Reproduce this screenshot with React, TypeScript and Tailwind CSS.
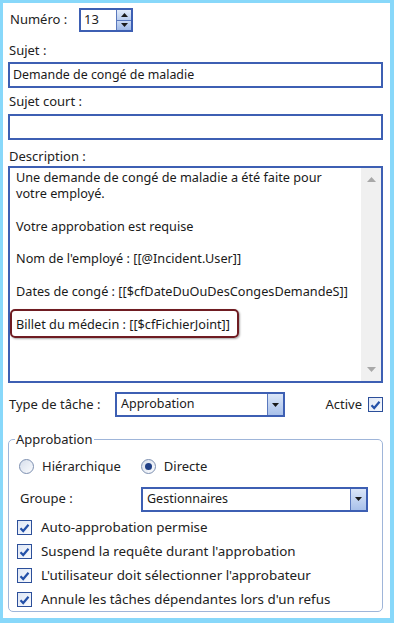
import React from "react";

const FONT = { fontFamily: '"Noto Sans", "Open Sans", sans-serif' };

function Check() {
  return (
    <span className="flex h-[15px] w-[15px] shrink-0 items-center justify-center border border-[#2c4f9a] bg-gradient-to-br from-[#dfe7f5] to-[#f7f9fd]">
      <svg width="11" height="10" viewBox="0 0 11 10" fill="none">
        <path d="M1.5 5.2 L4.2 8 L9.5 1.8" stroke="#2350a8" strokeWidth="2.2" />
      </svg>
    </span>
  );
}

function Radio({ on }: { on?: boolean }) {
  return (
    <span className="flex h-[15px] w-[15px] shrink-0 items-center justify-center rounded-full border border-[#7c8fb0] bg-gradient-to-br from-[#d7dfec] to-[#fbfcfe]">
      {on && <span className="h-[7px] w-[7px] rounded-full bg-[#1f3f86]" />}
    </span>
  );
}

function ComboArrow() {
  return (
    <span className="flex w-[16px] shrink-0 items-center justify-center border-l border-[#5a78bd] bg-gradient-to-b from-[#dbe6f8] to-[#a9c1ea]">
      <svg width="7" height="4" viewBox="0 0 7 4">
        <path d="M0 0 H7 L3.5 4 Z" fill="#1a1a1a" />
      </svg>
    </span>
  );
}

function Combo({ value, className }: { value: string; className: string }) {
  return (
    <div className={`flex h-[25px] border-2 border-[#3d5fb3] bg-white ${className}`}>
      <span className="flex flex-1 items-center pl-[4px] text-[12.5px] text-[#1a1a1a]">{value}</span>
      <ComboArrow />
    </div>
  );
}

export default function App() {
  const checks = [
    "Auto-approbation permise",
    "Suspend la requête durant l'approbation",
    "L'utilisateur doit sélectionner l'approbateur",
    "Annule les tâches dépendantes lors d'un refus",
  ];
  return (
    <div className="h-[623px] w-[394px] bg-[#88d8fa] pb-[5px] pl-[3px] pr-[4px] pt-[3px]" style={FONT}>
      <div className="flex h-full flex-col bg-white pl-[5px] pr-[7px] pt-[5px] text-[13px] text-[#222]">
        {/* Numéro */}
        <div className="flex items-center">
          <span className="w-[71px] pl-[2px]">Numéro :</span>
          <div className="flex h-[24px] w-[54px] border-2 border-[#3d5fb3]">
            <span className="flex flex-1 items-center pl-[3px] text-[13px]">13</span>
            <div className="flex w-[15px] flex-col border-l border-[#5a78bd]">
              <span className="flex flex-1 items-center justify-center border-b border-[#5a78bd] bg-gradient-to-b from-[#e3ecfa] to-[#b9cdee]">
                <svg width="7" height="4" viewBox="0 0 7 4">
                  <path d="M0 4 H7 L3.5 0 Z" fill="#1a1a1a" />
                </svg>
              </span>
              <span className="flex flex-1 items-center justify-center bg-gradient-to-b from-[#c8d8f3] to-[#9fb8e6]">
                <svg width="7" height="4" viewBox="0 0 7 4">
                  <path d="M0 0 H7 L3.5 4 Z" fill="#1a1a1a" />
                </svg>
              </span>
            </div>
          </div>
        </div>

        {/* Sujet */}
        <span className="mt-[10px] h-[16px] pl-[1px] leading-[16px]">Sujet :</span>
        <div className="mt-[4px] flex h-[26px] items-center border-2 border-[#3d5fb3] pl-[3px] text-[12.4px] text-[#1a1a1a]">
          Demande de congé de maladie
        </div>

        <span className="mt-[5px] h-[16px] pl-[1px] leading-[16px]">Sujet court :</span>
        <div className="mt-[5px] h-[26px] border-2 border-[#3d5fb3]" />

        <span className="mt-[8px] h-[16px] pl-[1px] leading-[16px]">Description :</span>
        <div className="mt-[2px] flex h-[217px] border-2 border-[#3d5fb3]">
          <div className="flex-1 pl-[6px] pt-[1px] text-[12.7px] leading-[16.3px] text-[#1a1a1a]">
            <p>Une demande de congé de maladie a été faite pour</p>
            <p>votre employé.</p>
            <p>&nbsp;</p>
            <p>Votre approbation est requise</p>
            <p>&nbsp;</p>
            <p>Nom de l'employé : [[@Incident.User]]</p>
            <p>&nbsp;</p>
            <p>Dates de congé : [[$cfDateDuOuDesCongesDemandeS]]</p>
            <p>&nbsp;</p>
            <p>
              <span className="relative">
                Billet du médecin : [[$cfFichierJoint]]
                <span className="absolute -bottom-[5px] -left-[6px] -right-[9px] -top-[6px] rounded-[5px] border-2 border-[#6f1c22] shadow-[1px_1px_2px_rgba(0,0,0,0.35)]" />
              </span>
            </p>
          </div>
          <div className="flex w-[20px] flex-col items-center justify-between bg-[#f0f0f0] py-[9px]">
            <svg width="9" height="5" viewBox="0 0 9 5">
              <path d="M0 5 H9 L4.5 0 Z" fill="#a8a8a8" />
            </svg>
            <svg width="9" height="5" viewBox="0 0 9 5">
              <path d="M0 0 H9 L4.5 5 Z" fill="#a8a8a8" />
            </svg>
          </div>
        </div>

        {/* Type de tâche */}
        <div className="mt-[9px] flex items-center">
          <span className="w-[107px] pl-[1px]">Type de tâche :</span>
          <Combo value="Approbation" className="w-[170px]" />
          <span className="ml-auto mr-[6px]">Active</span>
          <Check />
        </div>

        {/* Approbation group */}
        <fieldset className="mt-[15px] h-[180px] rounded-[5px] border border-[#9fb5d9] pl-[10px] pr-[14px]">
          <legend className="ml-[-4px] px-[1px] leading-[15px]">Approbation</legend>
          <div className="mt-[10px] flex items-center">
            <Radio />
            <span className="ml-[8px]">Hiérarchique</span>
            <span className="ml-[20px]">
              <Radio on />
            </span>
            <span className="ml-[8px]">Directe</span>
          </div>
          <div className="mt-[10px] flex items-center">
            <span className="w-[122px] pl-[1px]">Groupe :</span>
            <Combo value="Gestionnaires" className="flex-1" />
          </div>
          <div className="mt-[4px] flex flex-col text-[13.4px]">
            {checks.map((c) => (
              <div key={c} className="-ml-[2px] flex h-[24px] items-center">
                <Check />
                <span className="ml-[9px]">{c}</span>
              </div>
            ))}
          </div>
        </fieldset>
      </div>
    </div>
  );
}
